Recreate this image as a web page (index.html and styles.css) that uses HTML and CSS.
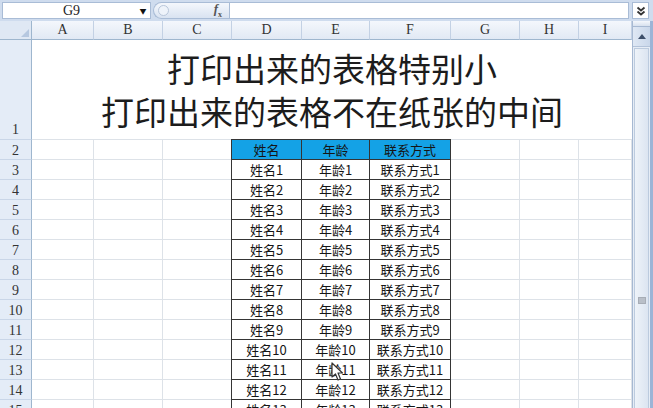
FILE: index.html
```html
<!DOCTYPE html>
<html lang="zh">
<head>
<meta charset="utf-8">
<title>Excel</title>
<link rel="stylesheet" href="styles.css">
</head>
<body>
<div class="app">
  <div class="fbar">
    <div class="namebox"><span class="nb-text">G9</span><span class="nb-arrow">&#9660;</span></div>
    <div class="fxpill"><span class="fx-circle"></span><span class="fx"><i>f</i><sub>x</sub></span></div>
    <div class="finput"></div>
    <div class="expand"><svg width="10" height="10" viewBox="0 0 10 10"><path d="M1.5 1.5 L5 4.5 L8.5 1.5 M1.5 5.5 L5 8.5 L8.5 5.5" fill="none" stroke="#333" stroke-width="1.8"/></svg></div>
  </div>
  <div class="main">
    <div class="sheet">
      <div class="corner"><svg width="8" height="8" viewBox="0 0 8 8"><path d="M8 0 L8 8 L0 8 Z" fill="#b6c8e0"/></svg></div>
      <div class="ch">A</div><div class="ch">B</div><div class="ch">C</div><div class="ch">D</div><div class="ch">E</div><div class="ch">F</div><div class="ch">G</div><div class="ch">H</div><div class="ch">I</div>

      <div class="rh rh1">1</div>
      <div class="c title"><div class="tl">打印出来的表格特别小</div><div class="tl">打印出来的表格不在纸张的中间</div></div>

      <div class="rh">2</div><div class="c"></div><div class="c"></div><div class="c"></div><div class="c t th dl">姓名</div><div class="c t th">年龄</div><div class="c t th">联系方式</div><div class="c"></div><div class="c"></div><div class="c"></div>
      <div class="rh">3</div><div class="c"></div><div class="c"></div><div class="c"></div><div class="c t dl">姓名1</div><div class="c t">年龄1</div><div class="c t">联系方式1</div><div class="c"></div><div class="c"></div><div class="c"></div>
      <div class="rh">4</div><div class="c"></div><div class="c"></div><div class="c"></div><div class="c t dl">姓名2</div><div class="c t">年龄2</div><div class="c t">联系方式2</div><div class="c"></div><div class="c"></div><div class="c"></div>
      <div class="rh">5</div><div class="c"></div><div class="c"></div><div class="c"></div><div class="c t dl">姓名3</div><div class="c t">年龄3</div><div class="c t">联系方式3</div><div class="c"></div><div class="c"></div><div class="c"></div>
      <div class="rh">6</div><div class="c"></div><div class="c"></div><div class="c"></div><div class="c t dl">姓名4</div><div class="c t">年龄4</div><div class="c t">联系方式4</div><div class="c"></div><div class="c"></div><div class="c"></div>
      <div class="rh">7</div><div class="c"></div><div class="c"></div><div class="c"></div><div class="c t dl">姓名5</div><div class="c t">年龄5</div><div class="c t">联系方式5</div><div class="c"></div><div class="c"></div><div class="c"></div>
      <div class="rh">8</div><div class="c"></div><div class="c"></div><div class="c"></div><div class="c t dl">姓名6</div><div class="c t">年龄6</div><div class="c t">联系方式6</div><div class="c"></div><div class="c"></div><div class="c"></div>
      <div class="rh">9</div><div class="c"></div><div class="c"></div><div class="c"></div><div class="c t dl">姓名7</div><div class="c t">年龄7</div><div class="c t">联系方式7</div><div class="c"></div><div class="c"></div><div class="c"></div>
      <div class="rh">10</div><div class="c"></div><div class="c"></div><div class="c"></div><div class="c t dl">姓名8</div><div class="c t">年龄8</div><div class="c t">联系方式8</div><div class="c"></div><div class="c"></div><div class="c"></div>
      <div class="rh">11</div><div class="c"></div><div class="c"></div><div class="c"></div><div class="c t dl">姓名9</div><div class="c t">年龄9</div><div class="c t">联系方式9</div><div class="c"></div><div class="c"></div><div class="c"></div>
      <div class="rh">12</div><div class="c"></div><div class="c"></div><div class="c"></div><div class="c t dl">姓名10</div><div class="c t">年龄10</div><div class="c t">联系方式10</div><div class="c"></div><div class="c"></div><div class="c"></div>
      <div class="rh">13</div><div class="c"></div><div class="c"></div><div class="c"></div><div class="c t dl">姓名11</div><div class="c t">年龄11</div><div class="c t">联系方式11</div><div class="c"></div><div class="c"></div><div class="c"></div>
      <div class="rh">14</div><div class="c"></div><div class="c"></div><div class="c"></div><div class="c t dl">姓名12</div><div class="c t">年龄12</div><div class="c t">联系方式12</div><div class="c"></div><div class="c"></div><div class="c"></div>
      <div class="rh">15</div><div class="c"></div><div class="c"></div><div class="c"></div><div class="c t dl">姓名13</div><div class="c t">年龄13</div><div class="c t">联系方式13</div><div class="c"></div><div class="c"></div><div class="c"></div>
    </div>
    <div class="vs">
      <div class="vs-split"></div>
      <div class="vs-up"><svg width="8" height="5" viewBox="0 0 8 5"><path d="M0 5 L4 0 L8 5 Z" fill="#3d4f6a"/></svg></div>
      <div class="vs-thumb"><div class="vs-grip"></div></div>
    </div>
  </div>
  <svg class="cursor" width="14" height="20" viewBox="0 0 14 20"><path d="M1 1 L1 15 L4.5 12 L7 18 L9.5 17 L7 11 L11.5 11 Z" fill="#fff" stroke="#333" stroke-width="1.2" stroke-linejoin="round"/></svg>
</div>
</body>
</html>
```

FILE: styles.css
```css
* { box-sizing: border-box; margin: 0; padding: 0; }
html, body { width: 653px; height: 408px; overflow: hidden; background: #fff; }
body { font-family: "Noto Sans CJK SC", "Liberation Sans", sans-serif; color: #1a1a1a; }

.app { position: relative; display: flex; flex-direction: column; width: 653px; height: 408px; overflow: hidden; }

/* formula bar */
.fbar { height: 21px; flex: none; display: flex; background: #cfdcee; padding: 2px 4px 2px 2px; }
.namebox { width: 149px; background: #fff; border: 1px solid #a9bcd6; display: flex; align-items: center; }
.nb-text { flex: 1; text-align: center; font-family: "Liberation Serif", serif; font-size: 14px; color: #222; padding-left: 4px; }
.nb-arrow { width: 14px; font-size: 7px; color: #111; text-align: center; }
.fxpill { width: 76px; margin-left: 2px; border: 1px solid #a9bcd6; border-right: none; border-radius: 9px 0 0 9px;
  background: linear-gradient(#f4f7fc, #d9e3f1); display: flex; align-items: center; justify-content: space-between; padding: 0 7px 0 4px; }
.fx-circle { width: 11px; height: 11px; border-radius: 50%; border: 1px solid #b8c6da; background: #eef3fa; }
.fx { font-family: "Liberation Serif", serif; font-size: 13px; color: #555; font-weight: bold; line-height: 1; }
.fx sub { font-size: 8px; font-style: normal; }
.finput { flex: 1; background: #fff; border: 1px solid #a9bcd6; }
.expand { width: 17px; margin-left: 3px; background: #fff; border: 1px solid #a9bcd6; display: flex; align-items: center; justify-content: center; }

/* sheet */
.main { flex: 1; display: flex; min-height: 0; }
.sheet { width: 632px; flex: none; display: grid;
  grid-template-columns: 32px 62px 69px 69px 70px 68px 81px 69px 59px 53px;
  grid-template-rows: 19px 100px repeat(14, 20px); overflow: hidden; }
.corner { background: #dfe8f4; border-right: 1px solid #9eb6ce; border-bottom: 1px solid #9eb6ce;
  display: flex; align-items: flex-end; justify-content: flex-end; padding: 0 2px 2px 0; }
.ch { background: linear-gradient(#f4f7fc, #e1e9f4); border-right: 1px solid #c3d1e4; border-bottom: 1px solid #9eb6ce;
  display: flex; align-items: center; justify-content: center; font-family: "Liberation Serif", serif; font-size: 14px; color: #333; }
.rh { background: #e4ecf7; border-right: 1px solid #9eb6ce; border-bottom: 1px solid #c9d6e8;
  display: flex; align-items: center; justify-content: center; font-family: "Liberation Serif", serif; font-size: 14px; color: #333; padding-top: 2px; }
.rh1 { align-items: flex-end; padding-bottom: 1px; }
.c { border-right: 1px solid #dde2e8; border-bottom: 1px solid #dde2e8; display: flex; align-items: center; justify-content: center;
  font-size: 13px; line-height: 19px; color: #151515; white-space: nowrap; overflow: hidden; }
.title { grid-column: 2 / 11; border-right: none; flex-direction: column; justify-content: flex-start; padding-top: 7px;
  font-size: 33px; color: #1c1c1c; }
.tl { height: 43px; line-height: 43px; }
.t { border-right-color: #353535; border-bottom-color: #353535; }
.th { background: #14a2e6; box-shadow: 0 -1px 0 #353535; }
.dl { box-shadow: -1px 0 0 #353535; }
.th.dl { box-shadow: -1px 0 0 #353535, 0 -1px 0 #353535, -1px -1px 0 #353535; }

/* vertical scrollbar */
.vs { width: 21px; flex: none; display: flex; flex-direction: column; background: #e6edf6;
  border-left: 1px solid #a7b9d2; border-right: 3px solid #9cb4d6; overflow: hidden; }
.vs-split { height: 6px; flex: none; background: linear-gradient(#f4f7fc, #d7e1ee); border-bottom: 1px solid #a7b9d2; }
.vs-up { height: 20px; flex: none; display: flex; align-items: center; justify-content: center;
  background: linear-gradient(90deg, #dfe8f4, #c9d7ea); border-bottom: 1px solid #b3c3d9; }
.vs-thumb { height: 520px; flex: none; margin: 1px 1px 0 1px; background: linear-gradient(90deg, #eef3f9, #dce5f1);
  border: 1px solid #bccbde; display: flex; justify-content: center; }
.vs-grip { width: 8px; height: 7px; margin-top: 248px; background: #b9bfc8; border: 1px solid #a7adb6; }

.cursor { position: absolute; left: 331px; top: 362px; }
```
